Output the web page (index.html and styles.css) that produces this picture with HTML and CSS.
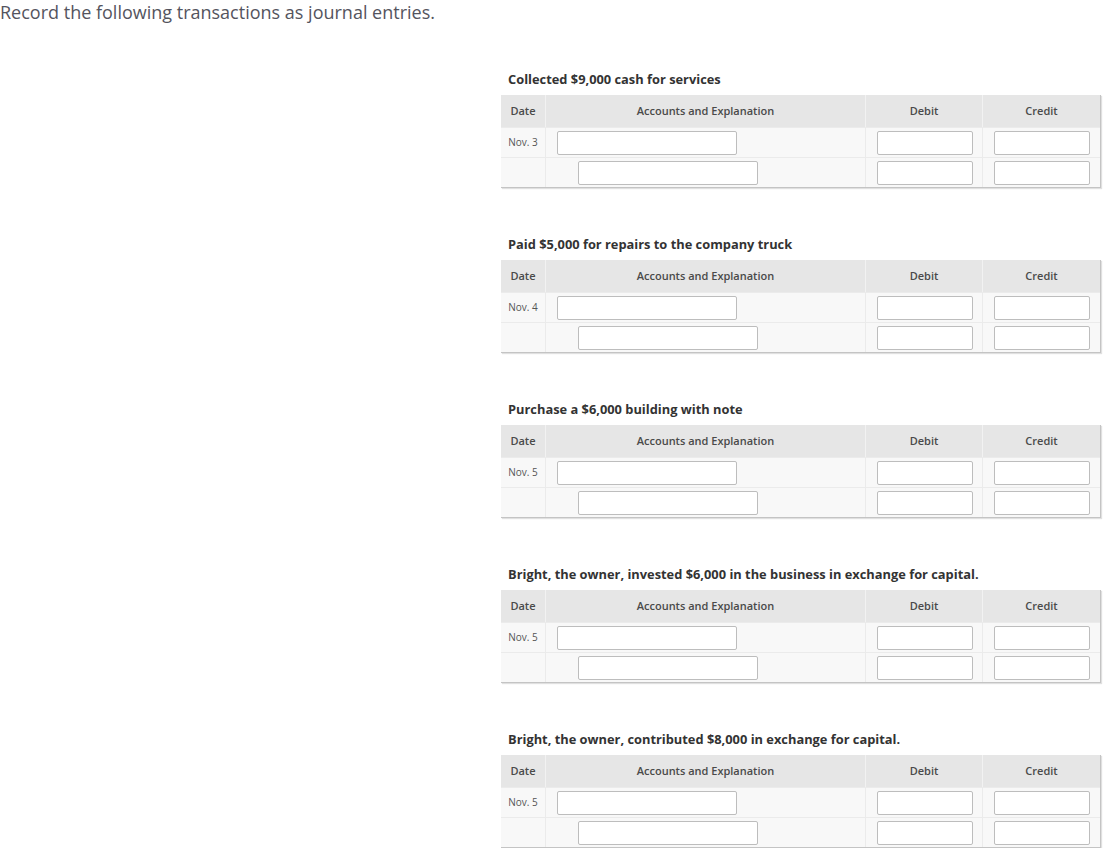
FILE: index.html
```html
<!DOCTYPE html>
<html>
<head>
<meta charset="utf-8">
<link rel="stylesheet" href="styles.css">
</head>
<body>
<h1 class="prompt">Record the following transactions as journal entries.</h1>
<div class="entries">
  <section class="entry">
    <h2 class="entry-title">Collected $9,000 cash for services</h2>
    <table class="journal">
      <colgroup><col class="c-date"><col class="c-acct"><col class="c-amt"><col class="c-amt2"></colgroup>
      <thead><tr><th>Date</th><th>Accounts and Explanation</th><th>Debit</th><th>Credit</th></tr></thead>
      <tbody>
        <tr><td class="date">Nov. 3</td><td><input class="acct" type="text"></td><td><input class="amt" type="text"></td><td><input class="amt" type="text"></td></tr>
        <tr><td class="date"></td><td><input class="acct indent" type="text"></td><td><input class="amt" type="text"></td><td><input class="amt" type="text"></td></tr>
      </tbody>
    </table>
  </section>
  <section class="entry">
    <h2 class="entry-title">Paid $5,000 for repairs to the company truck</h2>
    <table class="journal">
      <colgroup><col class="c-date"><col class="c-acct"><col class="c-amt"><col class="c-amt2"></colgroup>
      <thead><tr><th>Date</th><th>Accounts and Explanation</th><th>Debit</th><th>Credit</th></tr></thead>
      <tbody>
        <tr><td class="date">Nov. 4</td><td><input class="acct" type="text"></td><td><input class="amt" type="text"></td><td><input class="amt" type="text"></td></tr>
        <tr><td class="date"></td><td><input class="acct indent" type="text"></td><td><input class="amt" type="text"></td><td><input class="amt" type="text"></td></tr>
      </tbody>
    </table>
  </section>
  <section class="entry">
    <h2 class="entry-title">Purchase a $6,000 building with note</h2>
    <table class="journal">
      <colgroup><col class="c-date"><col class="c-acct"><col class="c-amt"><col class="c-amt2"></colgroup>
      <thead><tr><th>Date</th><th>Accounts and Explanation</th><th>Debit</th><th>Credit</th></tr></thead>
      <tbody>
        <tr><td class="date">Nov. 5</td><td><input class="acct" type="text"></td><td><input class="amt" type="text"></td><td><input class="amt" type="text"></td></tr>
        <tr><td class="date"></td><td><input class="acct indent" type="text"></td><td><input class="amt" type="text"></td><td><input class="amt" type="text"></td></tr>
      </tbody>
    </table>
  </section>
  <section class="entry">
    <h2 class="entry-title">Bright, the owner, invested $6,000 in the business in exchange for capital.</h2>
    <table class="journal">
      <colgroup><col class="c-date"><col class="c-acct"><col class="c-amt"><col class="c-amt2"></colgroup>
      <thead><tr><th>Date</th><th>Accounts and Explanation</th><th>Debit</th><th>Credit</th></tr></thead>
      <tbody>
        <tr><td class="date">Nov. 5</td><td><input class="acct" type="text"></td><td><input class="amt" type="text"></td><td><input class="amt" type="text"></td></tr>
        <tr><td class="date"></td><td><input class="acct indent" type="text"></td><td><input class="amt" type="text"></td><td><input class="amt" type="text"></td></tr>
      </tbody>
    </table>
  </section>
  <section class="entry">
    <h2 class="entry-title">Bright, the owner, contributed $8,000 in exchange for capital.</h2>
    <table class="journal">
      <colgroup><col class="c-date"><col class="c-acct"><col class="c-amt"><col class="c-amt2"></colgroup>
      <thead><tr><th>Date</th><th>Accounts and Explanation</th><th>Debit</th><th>Credit</th></tr></thead>
      <tbody>
        <tr><td class="date">Nov. 5</td><td><input class="acct" type="text"></td><td><input class="amt" type="text"></td><td><input class="amt" type="text"></td></tr>
        <tr><td class="date"></td><td><input class="acct indent" type="text"></td><td><input class="amt" type="text"></td><td><input class="amt" type="text"></td></tr>
      </tbody>
    </table>
  </section>
</div>
</body>
</html>
```

FILE: styles.css
```css
html, body {
  margin: 0;
  padding: 0;
  background: #ffffff;
  font-family: "Open Sans", "Liberation Sans", sans-serif;
}

.prompt {
  margin: 0;
  font-size: 18px;
  line-height: 24px;
  font-weight: 400;
  color: #54545e;
}

.entries {
  display: flex;
  flex-direction: column;
  gap: 47px;
  padding-left: 501px;
  margin-top: 46px;
}

.entry {
  display: flex;
  flex-direction: column;
  gap: 7px;
}

.entry-title {
  margin: 0;
  padding-left: 7px;
  font-size: 12.85px;
  line-height: 18px;
  height: 18px;
  font-weight: 700;
  color: #333333;
}

.journal {
  width: 600px;
  border-collapse: separate;
  border-spacing: 0;
  table-layout: fixed;
  border-right: 1px solid #c4c4c4;
  border-bottom: 1px solid #c4c4c4;
  box-shadow: 1px 1px 1px rgba(0, 0, 0, 0.12);
}

.c-date { width: 44px; }
.c-acct { width: 320px; }
.c-amt { width: 117px; }
.c-amt2 { width: 118px; }

.journal th {
  height: 32px;
  box-sizing: border-box;
  padding: 0 0 1px 0;
  background: #e6e6e6;
  font-size: 11px;
  font-weight: 600;
  color: #4a4a4a;
  text-align: center;
  border-left: 1px solid #f2f2f2;
}

.journal th:first-child { border-left: none; }

.journal td {
  height: 30px;
  box-sizing: border-box;
  padding: 0 0 0 11px;
  background: #f8f8f8;
  border-top: 1px solid #ebebeb;
  border-left: 1px solid #ebebeb;
  vertical-align: middle;
}

.journal td:first-child { border-left: none; }

.journal td.date {
  padding: 0 0 2px 0;
  text-align: center;
  font-size: 10px;
  color: #555555;
}

.journal input {
  display: block;
  box-sizing: border-box;
  height: 24px;
  margin: 0;
  padding: 0 4px;
  border: 1px solid #bdbdbd;
  border-radius: 2px;
  background: #ffffff;
  font-family: inherit;
}

.journal input.acct { width: 180px; }
.journal input.acct.indent { margin-left: 21px; }
.journal input.amt { width: 96px; }
```
